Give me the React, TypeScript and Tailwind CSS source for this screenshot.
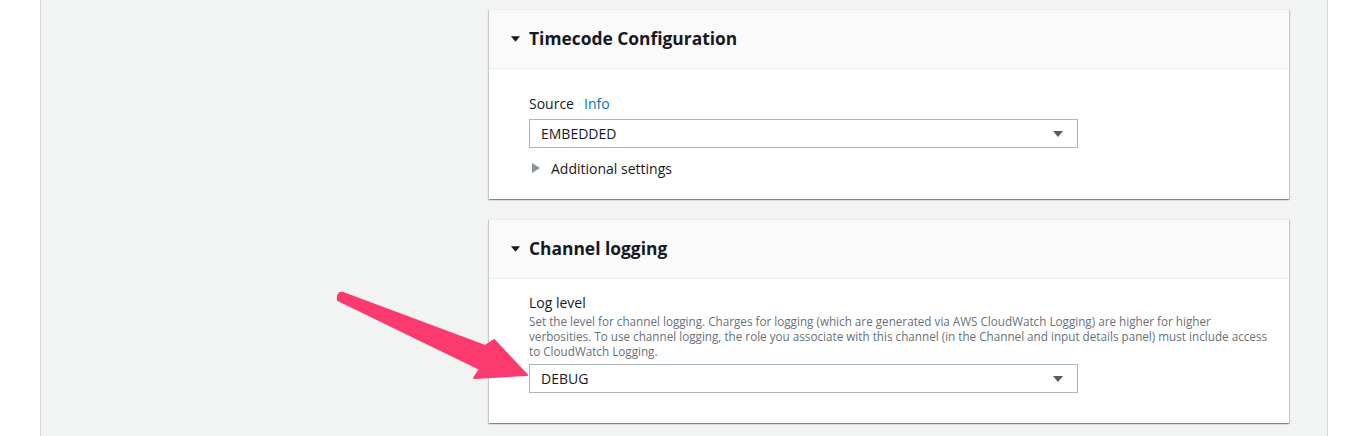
import React from "react";

const panelShadow =
  "shadow-[0_1px_1px_0_rgba(0,28,36,0.3),1px_1px_1px_0_rgba(0,28,36,0.15),-1px_1px_1px_0_rgba(0,28,36,0.15)]";

function Caret({ className }: { className?: string }) {
  return (
    <svg width="12" height="8" viewBox="0 0 12 8" className={className}>
      <path d="M1 1h10L6 7z" fill="currentColor" />
    </svg>
  );
}

function Select({ value }: { value: string }) {
  return (
    <div className="w-[549px] h-[29px] border border-[#aab7b8] bg-white flex items-center justify-between pl-[11px] pr-[13px]">
      <span className="text-[14px] text-[#16191f]">{value}</span>
      <Caret className="text-[#545b64]" />
    </div>
  );
}

function Panel({ title, children }: { title: string; children: React.ReactNode }) {
  return (
    <section className={`w-[800px] bg-white border-t border-[#eaeded] ${panelShadow}`}>
      <header className="h-[59px] bg-[#fafafa] border-b border-[#eaeded] flex items-center pl-[21px] gap-[8px]">
        <Caret className="text-[#16191f] w-[11px]" />
        <h2 className="text-[17.4px] font-bold text-[#16191f] leading-none">{title}</h2>
      </header>
      {children}
    </section>
  );
}

export default function App() {
  return (
    <div className="relative flex h-[436px] w-[1368px] overflow-hidden bg-white font-['Open_Sans',sans-serif]">
      <div className="w-[40px] shrink-0" />
      <main className="w-[1288px] shrink-0 bg-[#f2f3f3] border-x border-[#d5dbdb] pl-[448px] pt-[9px] flex flex-col gap-[20px]">
        <Panel title="Timecode Configuration">
          <div className="pl-[40px] pt-[24px] pb-[19px]">
            <div className="flex items-center gap-[10px] h-[20px] text-[14px]">
              <span className="text-[#16191f]">Source</span>
              <a className="text-[#0073bb]" href="#">Info</a>
            </div>
            <div className="mt-[6px]">
              <Select value="EMBEDDED" />
            </div>
            <div className="mt-[8px] flex items-center gap-[10px] h-[24px] text-[14px] text-[#16191f]">
              <svg width="10" height="12" viewBox="0 0 10 12" className="text-[#879596] ml-[2px]">
                <path d="M1 1v10l8-5z" fill="currentColor" />
              </svg>
              <span>Additional settings</span>
            </div>
          </div>
        </Panel>
        <Panel title="Channel logging">
          <div className="pl-[40px] pt-[14px] pb-[30px]">
            <div className="text-[14px] text-[#16191f] h-[20px] leading-[20px]">Log level</div>
            <p className="mt-[1px] text-[11.7px] leading-[15px] text-[#687078] whitespace-nowrap">
              Set the level for channel logging. Charges for logging (which are generated via AWS CloudWatch Logging) are higher for higher
              <br />
              verbosities. To use channel logging, the role you associate with this channel (in the Channel and input details panel) must include access
              <br />
              to CloudWatch Logging.
            </p>
            <div className="mt-[5px]">
              <Select value="DEBUG" />
            </div>
          </div>
        </Panel>
      </main>
      <svg className="absolute left-0 top-0 pointer-events-none" width="1368" height="436" viewBox="0 0 1368 436">
        <path
          d="M338 296 Q339 292 343 293 L485 346 L494 340 L527 375 L474 378 L480 369 L338 300 Z"
          fill="#fb3a6e"
          stroke="#fb3a6e"
          strokeWidth="2"
          strokeLinejoin="round"
        />
      </svg>
    </div>
  );
}
